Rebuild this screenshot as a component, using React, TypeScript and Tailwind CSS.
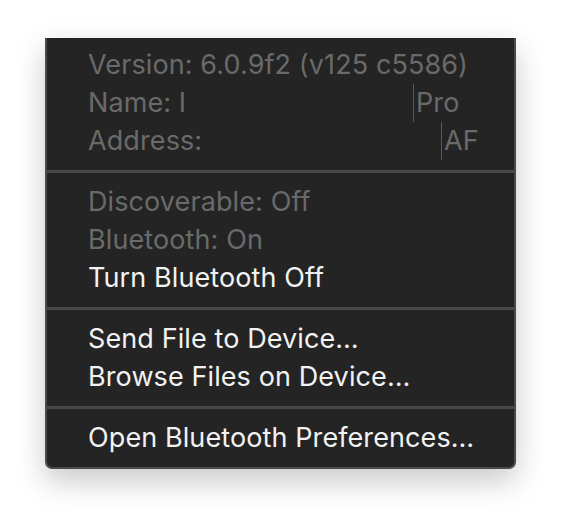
const dim = 'text-[#6a6a6a]';
const on = 'text-[#f2f2f2]';

const Separator = () => <div className="h-[3px] my-[10px] bg-[#484848]" />;

const Row = ({ children, muted }: { children: React.ReactNode; muted?: boolean }) => (
  <div className={`flex items-center h-[38px] pl-[41px] ${muted ? dim : on}`}>{children}</div>
);

export default function App() {
  return (
    <div className="w-[562px] h-[522px] bg-white pt-[38px] pl-[45px]">
      <div
        className="w-[471px] bg-[#242424] border-x-2 border-b-2 border-[#4a4a4a] rounded-b-[7px] pt-[8px] pb-[10px] shadow-[0_12px_30px_rgba(0,0,0,0.22)] text-[27px] tracking-[0.1px]"
        style={{ fontFamily: 'Inter, "Noto Sans", sans-serif' }}
      >
        {/* 设备信息 */}
        <Row muted>Version: 6.0.9f2 (v125 c5586)</Row>
        <Row muted>
          <span className="w-[325px] shrink-0">Name: I</span>
          <span className="h-full flex items-center border-l border-[#5a5a5a] pl-[2px]">Pro</span>
        </Row>
        <Row muted>
          <span className="w-[353px] shrink-0">Address:</span>
          <span className="h-full flex items-center border-l border-[#5a5a5a] pl-[2px]">AF</span>
        </Row>
        <Separator />

        {/* 蓝牙状态 */}
        <Row muted>Discoverable: Off</Row>
        <Row muted>Bluetooth: On</Row>
        <Row>Turn Bluetooth Off</Row>
        <Separator />

        <Row>Send File to Device…</Row>
        <Row>Browse Files on Device…</Row>
        <Separator />

        <Row>Open Bluetooth Preferences…</Row>
      </div>
    </div>
  );
}
